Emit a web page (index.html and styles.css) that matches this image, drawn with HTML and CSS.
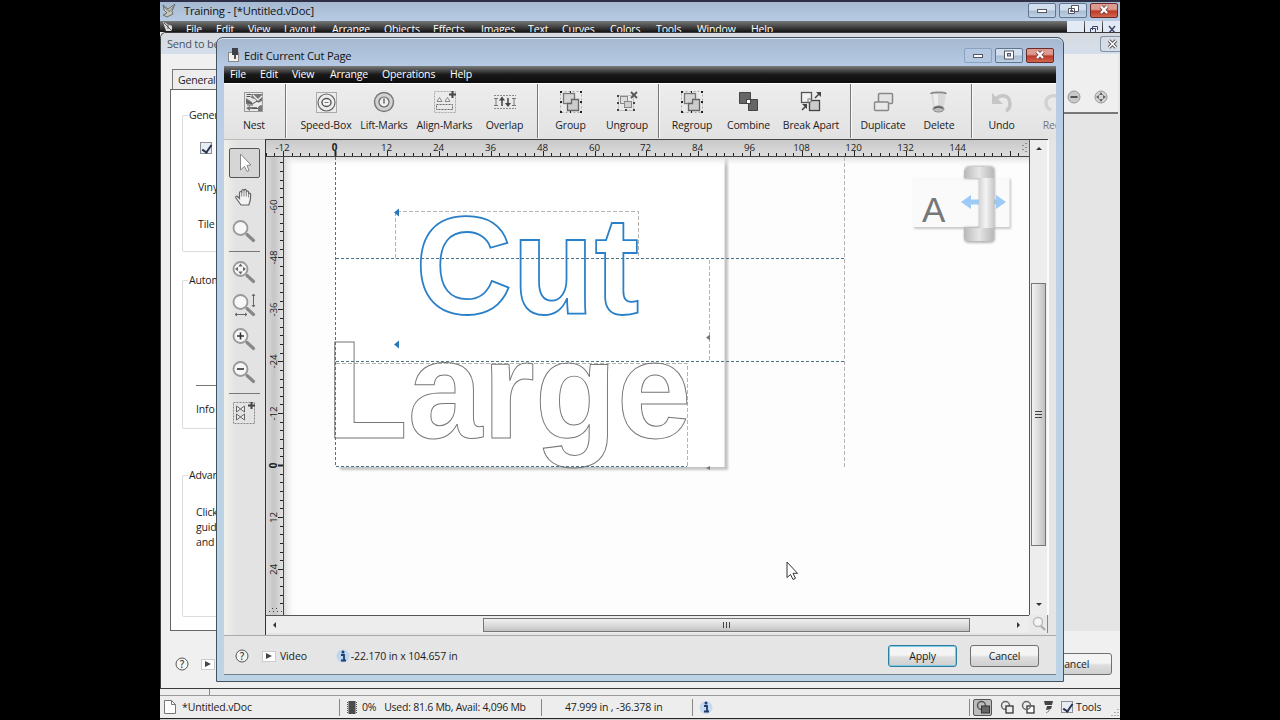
FILE: index.html
```
<!DOCTYPE html>
<html lang="en">
<head>
  <meta charset="utf-8">
  <title>Edit Current Cut Page</title>
  <link rel="stylesheet" href="styles.css">
</head>
<body>
  <div class="desktop">

    <!-- Main application -->
    <div class="app">
      <div class="titlebar">
        <svg class="app-icon" width="14" height="15" viewBox="0 0 14 15"><path d="M1 2l5 4 7-5-3 7 1 3-6 3-4-2 4-2-3-3z" fill="#c5c6bd" stroke="#6d6f6b"/><path d="M2 4l6 5M12 3L7 9" stroke="#777" fill="none"/></svg>
        <span class="title">Training - [*Untitled.vDoc]</span>
        <div class="win-buttons">
          <span class="win-btn"><svg width="12" height="10"><rect x="1.500" y="4.500" width="9" height="3" fill="#fff" stroke="#556"/></svg></span>
          <span class="win-btn"><svg width="12" height="10"><path d="M4.500 .5h7v6h-7z M1.500 3.500h6v5h-6z" fill="#fff" stroke="#556"/><path d="M3.500 5.500h2v1h-2z" stroke="#556"/></svg></span>
          <span class="win-btn close"><svg width="12" height="10"><path d="M3 1.500l6 6.500M9 1.500l-6 6.500" stroke="#633" stroke-width="4"/><path d="M3 1.500l6 6.500M9 1.500l-6 6.500" stroke="#fff" stroke-width="2.400"/></svg></span>
        </div>
      </div>
      <div class="app-menu">
        <svg width="12" height="10" viewBox="0 0 12 10"><path d="M1 1l9 4v5H4z" fill="#ddd"/><path d="M2 2l8 8M6 2v6" stroke="#555"/></svg>
        <span>File</span><span>Edit</span><span>View</span><span>Layout</span><span>Arrange</span><span>Objects</span><span>Effects</span><span>Images</span><span>Text</span><span>Curves</span><span>Colors</span><span>Tools</span><span>Window</span><span>Help</span>
        <div class="mdi"><i></i><i><svg width="8" height="8"><path d="M2.500 5V1.500h5V5M.5 7V3.500h5V8" fill="none" stroke="#446"/></svg></i><i><svg width="8" height="8"><path d="M1 1l6 7M7 1L1 8" stroke="#446" stroke-width="1.500"/></svg></i></div>
      </div>
      <div class="app-body"></div>
      <div class="app-scroll"><i></i><b></b></div>
      <div class="statusbar">
        <div class="st doc"><svg width="12" height="14"><path d="M.5.5h7l4 4v9H.5z" fill="#fff" stroke="#777"/><path d="M7.500.5v4h4" fill="none" stroke="#777"/></svg><span>*Untitled.vDoc</span></div>
        <div class="st mem"><svg width="10" height="13"><rect x="1.500" width="7" height="13" fill="#4c4c4c"/><path d="M.5 1v12M9.500 1v12" stroke="#555" stroke-dasharray="1 1"/></svg><span>0%</span><span>Used: 81.6 Mb, Avail: 4,096 Mb</span></div>
        <div class="st pos">47.999 in , -36.378 in</div>
        <div class="st info"><svg width="14" height="15" viewBox="0 0 14 15"><circle cx="7" cy="7.500" r="6.500" fill="#c6d9ee"/><path d="M5 6h3v5M5 11.500h5" stroke="#1f3e6d" stroke-width="1.800" fill="none"/><circle cx="7" cy="3" r="1.500" fill="#1f3e6d"/></svg></div>
        <div class="st modes">
          <span class="mode on"><svg width="14" height="14"><circle cx="5.500" cy="5.500" r="4" fill="none" stroke="#555" stroke-width="1.500"/><rect x="5.500" y="6" width="8" height="7" fill="#666" stroke="#333"/></svg></span>
          <span class="mode"><svg width="14" height="14"><circle cx="5.500" cy="5.500" r="4" fill="none" stroke="#666" stroke-width="1.500"/><rect x="6" y="6" width="7" height="7" fill="#eee" stroke="#333" stroke-width="1.300"/></svg></span>
          <span class="mode"><svg width="14" height="14"><rect x="6" y="6" width="7" height="7" fill="#fff" stroke="#333" stroke-width="1.300"/><circle cx="5.500" cy="5.500" r="4" fill="none" stroke="#666" stroke-width="1.500"/></svg></span>
          <span class="mode"><svg width="12" height="14"><path d="M1 1h9l-1 4H2zM4 6h5l-1 3-5 1z" fill="#444"/><path d="M6 9v2l-3 2" fill="none" stroke="#888"/></svg></span>
          <span class="check"></span><span>Tools</span>
          <svg class="grip" width="8" height="8"><path d="M7 1v1M4 4v1M7 4v1M1 7v1M4 7v1M7 7v1" stroke="#999" stroke-width="1.500"/></svg>
        </div>
      </div>
      <div class="taskbar"></div>
    </div>

    <!-- Dialog behind the editor -->
    <div class="send">
      <div class="send-title"><span>Send to be</span><span class="send-x"><svg width="11" height="10"><path d="M2 1.500l7 7M9 1.500l-7 7" stroke="#555" stroke-width="3.500"/><path d="M2 1.500l7 7M9 1.500l-7 7" stroke="#fff" stroke-width="1.500"/></svg></span></div>
      <div class="send-main">
        <div class="send-left">
          <div class="tab">General</div>
          <div class="tab-page">
            <fieldset class="g1"><legend>General</legend>
              <div class="check-row"><span class="check"></span></div>
              <p class="vinyl">Vinyl</p>
              <p class="tile">Tile</p>
            </fieldset>
            <fieldset class="g2"><legend>Automatic</legend>
              <hr><p>Info</p>
            </fieldset>
            <fieldset class="g3"><legend>Advanced</legend>
              <p>Click<br>guide<br>and</p>
            </fieldset>
          </div>
        </div>
        <div class="send-right">
          <div class="send-tools">
            <svg width="14" height="14"><circle cx="7" cy="7" r="6" fill="#c9c9c9" stroke="#999"/><path d="M3.500 7h7" stroke="#555" stroke-width="2"/></svg>
            <svg width="14" height="14"><circle cx="7" cy="7" r="6" fill="#d4d4d4" stroke="#999"/><path d="M7 2l2 3H5zM7 12l2-3H5zM2 7l3-2v4zM12 7L9 5v4z" fill="#666"/></svg>
          </div>
        </div>
      </div>
      <div class="send-foot">
        <svg width="14" height="14"><circle cx="7" cy="7" r="6" fill="#f6f6f6" stroke="#555"/><text x="7" y="10.500" class="q">?</text></svg>
        <span class="play"></span>
        <span class="btn send-cancel">Cancel</span>
      </div>
    </div>

    <!-- Edit Current Cut Page -->
    <div class="editor">
      <div class="ed-title">
        <svg width="13" height="15" viewBox="0 0 13 15"><rect x="1.500" y="4.500" width="10" height="9" fill="#f2f2ee" stroke="#888"/><rect x="5" y="0" width="6" height="7" fill="#3c4248"/><path d="M8 7v4" stroke="#555" stroke-width="2"/></svg>
        <span class="title">Edit Current Cut Page</span>
        <div class="win-buttons">
          <span class="win-btn min"><svg width="12" height="10"><rect x="1.500" y="4.500" width="9" height="3" fill="#fff" stroke="#556"/></svg></span>
          <span class="win-btn"><svg width="12" height="10"><rect x="1.500" y="1" width="9" height="8" fill="#fff" stroke="#556"/><rect x="4.500" y="3.500" width="3" height="2.500" fill="#abd" stroke="#556"/></svg></span>
          <span class="win-btn close"><svg width="12" height="10"><path d="M3 1.500l6 6.500M9 1.500l-6 6.500" stroke="#633" stroke-width="4"/><path d="M3 1.500l6 6.500M9 1.500l-6 6.500" stroke="#fff" stroke-width="2.400"/></svg></span>
        </div>
      </div>

      <div class="ed-client">
        <div class="ed-menu"><span>File</span><span>Edit</span><span>View</span><span>Arrange</span><span>Operations</span><span>Help</span></div>

        <div class="toolbar">
          <div class="tool"><svg viewBox="0 0 24 24"><rect x="2.500" y="2.500" width="18" height="19" fill="#e8e8e8" stroke="#999"/><path d="M10 4h10v7l-4 2-3-4-4-1zM4 8l6 4v2H4zM20 14v7h-4v-4zM8 16l-4 2 4 3v-2h7v-2H8z" fill="#777"/><path d="M4.500 4.500h5M4.500 6.500h4M4 11l6 3 9-5M5 15h6M10 18.500h6" fill="none" stroke="#555"/><path d="M11 5l5 5 4-4M15 13l5 2" fill="none" stroke="#f3f3f3" stroke-width="1.300"/></svg><span>Nest</span></div>
          <i class="sep"></i>
          <div class="tool"><svg viewBox="0 0 24 24"><rect x="2.500" y="2.500" width="20" height="20" fill="#ececec" stroke="#aaa"/><circle cx="12.500" cy="12.500" r="8.500" fill="none" stroke="#666" stroke-width="1.200"/><ellipse cx="12.500" cy="12.500" rx="4.500" ry="4" fill="#f5f5f5" stroke="#555" stroke-width="1.400"/><path d="M10.500 12.500h4" stroke="#777"/></svg><span>Speed-Box</span></div>
          <div class="tool"><svg viewBox="0 0 24 24"><circle cx="12" cy="12" r="9.500" fill="#d2d2d2" stroke="#777" stroke-width="1.400"/><circle cx="12" cy="12" r="5" fill="#eee" stroke="#666" stroke-width="1.200"/><path d="M12 8.500v5" stroke="#555" stroke-width="1.300"/></svg><span>Lift-Marks</span></div>
          <div class="tool"><svg viewBox="0 0 24 24"><rect x="1.500" y="1.500" width="21" height="21" fill="none" stroke="#aaa" stroke-dasharray="2 1"/><path d="M4 11.500l2.500-4 2.500 4zM12 11.500l2.500-4 2.500 4z" fill="#f3f3f3" stroke="#888"/><rect x="3.500" y="14.500" width="16" height="5" fill="none" stroke="#666" stroke-dasharray="2 1"/><path d="M16 4.500h7M19.500 1v7" stroke="#444" stroke-width="2"/></svg><span>Align-Marks</span></div>
          <div class="tool"><svg viewBox="0 0 24 24"><path d="M1 5.500h22M1 18.500h22" stroke="#888" stroke-dasharray="2 1"/><path d="M1 8.500h4M3 8v7M1 15.500h4M19 8.500h4M21 8v7M19 15.500h4" stroke="#777"/><path d="M9 16V9M15 8v7" stroke="#444" stroke-width="1.500"/><path d="M6 10.500l3-4 3 4zM12 13l3 4 3-4z" fill="#444"/></svg><span>Overlap</span></div>
          <i class="sep"></i>
          <div class="tool"><svg viewBox="0 0 24 24"><g id="group-shape"><rect x="1.500" y="1.500" width="21" height="21" fill="none" stroke="#aaa" stroke-dasharray="2 2"/><rect x="4.500" y="3.500" width="11" height="10" fill="#d5d5d5" stroke="#777" stroke-width="1.300"/><path d="M12.500 9.500h7v11h-11v-7h4z" fill="#ccc" stroke="#666" stroke-width="1.300"/><path d="M1 1h2v2H1zM21 1h2v2h-2zM1 21h2v2H1zM21 21h2v2h-2zM11 1h1v2h-1zM11 21h1v2h-1zM1 11h2v2H1zM21 11h2v2h-2z" fill="#222"/></g></svg><span>Group</span></div>
          <div class="tool"><svg viewBox="0 0 24 24"><rect x="3.500" y="5.500" width="15" height="15" fill="none" stroke="#999" stroke-dasharray="1 1"/><rect x="5.500" y="6.500" width="7" height="7" fill="#ddd" stroke="#888"/><rect x="9.500" y="11.500" width="7" height="6" fill="#d0d0d0" stroke="#888"/><path d="M2 5h2v2H2zM2 19h2v2H2zM18 19h2v2h-2zM2 12h2v2H2zM10 19h2v2h-2zM18 12h2v2h-2z" fill="#444"/><path d="M16 2l6 6M22 2l-6 6" stroke="#555" stroke-width="1.800"/></svg><span>Ungroup</span></div>
          <i class="sep"></i>
          <div class="tool"><svg viewBox="0 0 24 24"><use href="#group-shape"/></svg><span>Regroup</span></div>
          <div class="tool"><svg viewBox="0 0 24 24"><path d="M2.500 2.500h11v7h7v11h-9v-7h-9z" fill="#666" stroke="#444"/><rect x="9.500" y="9.500" width="4" height="4" fill="#fff" stroke="#444"/></svg><span>Combine</span></div>
          <div class="tool"><svg viewBox="0 0 24 24"><rect x="2.500" y="2.500" width="10" height="10" fill="#f1f1f1" stroke="#555" stroke-width="1.300"/><rect x="10.500" y="10.500" width="10" height="10" fill="#ccc" stroke="#444" stroke-width="1.300"/><path d="M16 8l4-4M7 16l-4 4" stroke="#444" stroke-width="1.500"/><path d="M17 2h5v5zM8 14v5l-5-5z" fill="#444"/><rect x="9" y="9" width="3" height="3" fill="#fff" stroke="#777"/></svg><span>Break Apart</span></div>
          <i class="sep"></i>
          <div class="tool"><svg viewBox="0 0 24 24"><rect x="7.500" y="3.500" width="14" height="10" rx="1" fill="#e4e4e4" stroke="#888" stroke-width="1.500"/><rect x="3.500" y="12" width="14" height="8.500" rx="1" fill="#e9e9e9" stroke="#888" stroke-width="1.500"/></svg><span>Duplicate</span></div>
          <div class="tool"><svg viewBox="0 0 24 24"><path d="M4 3h15l-2.500 17h-10z" fill="#d8d8d8"/><path d="M6 4h5v14H8z" fill="#eee"/><path d="M3.500 3.500c0-2 16-2 16 0-4-1-12-1-16 0z" fill="#777" stroke="#888"/><ellipse cx="11.500" cy="19" rx="5.500" ry="3" fill="#bbb" stroke="#888"/><path d="M7 18.500c3-2 6-2 9 0" stroke="#555" fill="none" stroke-width="1.500"/></svg><span>Delete</span></div>
          <i class="sep"></i>
          <div class="tool"><svg viewBox="0 0 24 24"><path d="M5 10c6-7 15-5 15 4 0 3-2 6-4 7" fill="none" stroke="#c6c6c6" stroke-width="3.500"/><path d="M2 3v11h11z" fill="#c6c6c6"/></svg><span>Undo</span></div>
          <div class="tool redo"><svg viewBox="0 0 24 24"><path d="M19 10C13 3 3 5 3 13c0 4 2 6 5 7" fill="none" stroke="#d2d2d2" stroke-width="3.500"/></svg><span>Redo</span></div>
        </div>

        <div class="work">
          <div class="side">
            <div class="side-tool active"><svg viewBox="0 0 24 24"><path d="M8.500 3v16l4-3.500 2.500 5 2-1-2-5 4-.5z" fill="#fff" stroke="#888"/></svg></div>
            <div class="side-tool hand"><svg viewBox="0 0 24 24"><path d="M9 20L4 13c-1-2 1-2.500 2-1l1.500 1.500V8c0-2 2-2 2.200 0l.1-2c0-2 2-2 2.200 0l.2-.8c.5-1.400 2-1 2.100.6l.1 1c.6-1.300 2.100-1 2.200.5l.1 1.500c.9-.8 2-.5 2 .8l-.4 5.500-1.500 4.900z" fill="#f4f4f4" stroke="#666" stroke-width="1.200"/><path d="M9.700 7v4.500M12 6v5.500M14.300 7v4.500M16.600 9v3.500" stroke="#888"/></svg></div>
            <div class="side-tool zoom"><svg viewBox="0 0 24 24"><g id="lens"><path d="M15 15.500l6.500 6" stroke="#888" stroke-width="3.200" stroke-linecap="round"/><circle cx="8.500" cy="9" r="7" fill="#f7f7f7" stroke="#999" stroke-width="1.800"/></g></svg></div>
            <i class="hsep s1"></i>
            <div class="side-tool fit"><svg viewBox="0 0 24 24"><use href="#lens"/><path d="M8.500 3.500l2.200 3H6.300zM8.500 14.500l2.200-3H6.300zM3 9l3-2.200v4.400zM14 9l-3-2.200v4.400z" fill="#666"/></svg></div>
            <div class="side-tool fitpage"><svg viewBox="0 0 24 24"><use href="#lens"/><path d="M21.500 1v13M3 21.500h12M20 3l1.500-2L23 3M20 12l1.500 2 1.500-2M5 20l-2 1.500L5 23M13 20l2 1.500-2 1.500" fill="none" stroke="#666"/></svg></div>
            <div class="side-tool zin"><svg viewBox="0 0 24 24"><use href="#lens"/><path d="M5 9h7M8.500 5.500v7" stroke="#333" stroke-width="1.600"/></svg></div>
            <div class="side-tool zout"><svg viewBox="0 0 24 24"><use href="#lens"/><path d="M5 9h7" stroke="#333" stroke-width="1.600"/></svg></div>
            <i class="hsep s2"></i>
            <div class="side-tool marks"><svg viewBox="0 0 24 24"><rect x="1.500" y="1.500" width="21" height="21" fill="none" stroke="#888" stroke-dasharray="2 1"/><path d="M4.500 5v6l4-3zM12.500 5v6l-4-3zM4.500 13v6l4-3zM12.500 13v6l-4-3z" fill="#eee" stroke="#666"/><path d="M16 4.500h7M19.500 1v7" stroke="#444" stroke-width="2"/></svg></div>
          </div>

          <div class="view">
            <svg class="ruler-top" id="rulerTop" viewBox="266 140 763 17"></svg>
            <svg class="ruler-left" id="rulerLeft" viewBox="266 157 18 458"></svg>
            <svg class="canvas" viewBox="284 157 745 458">
              <defs>
                <linearGradient id="fadeDown" x2="0" y2="1"><stop offset="0" stop-color="#dedede"/><stop offset="1" stop-color="#fdfdfd" stop-opacity="0"/></linearGradient>
                <linearGradient id="fadeRight"><stop offset="0" stop-color="#dadada"/><stop offset="1" stop-color="#fdfdfd" stop-opacity="0"/></linearGradient>
                <linearGradient id="roll"><stop offset="0" stop-color="#b8b8b8"/><stop offset=".5" stop-color="#e6e6e6"/><stop offset="1" stop-color="#b8b8b8"/></linearGradient>
                <linearGradient id="bar"><stop offset="0" stop-color="#d4d4d4"/><stop offset=".45" stop-color="#f4f4f4"/><stop offset="1" stop-color="#c8c8c8"/></linearGradient>
                <filter id="soft"><feGaussianBlur stdDeviation="1.300"/></filter>
              </defs>
              <rect x="284" y="157" width="745" height="458" fill="#fdfdfd"/>
              <!-- vinyl page -->
              <rect x="340" y="150" width="388" height="320" fill="#c4c4c4" filter="url(#soft)"/>
              <rect x="335" y="157" width="389.500" height="310" fill="#fff"/>
              <rect x="284" y="157" width="745" height="10" fill="url(#fadeDown)"/>
              <rect x="284" y="157" width="12" height="458" fill="url(#fadeRight)"/>

              <g class="bounds">
                <path d="M395.500 258V211.500H638.500V258M709.500 260V361M336 363.500H687.500V466M844.500 157V467"/>
              </g>
              <text class="outline grey" x="338.200" y="438.500" transform="scale(.963 1)">Large</text>
              <text class="outline blue" x="431.300" y="314" transform="scale(.963 1)">Cut</text>
              <g class="tiles">
                <path d="M335.500 157V466.500H687"/>
                <path d="M336 258.500H844M336 361.500H844"/>
              </g>
              <path d="M394 212.500l5-4v8zM394 344.500l5-4v8z" fill="#2878b8"/>
              <path d="M706 337.500l4-3v6zM706 468l4-2v4z" fill="#777"/>

              <!-- orientation preview -->
              <rect x="914" y="179" width="97" height="50" fill="#c8c8c8" filter="url(#soft)"/>
              <rect x="913" y="177" width="96.500" height="50" fill="#fafafa"/>
              <text x="922" y="222" class="preview-a">A</text>
              <path d="M961 202l10-7v4.500h10v5h-10v4.500zM1006 202l-10-7v4.500h-4v5h4v4.500z" fill="#9ccbf8"/>
              <path d="M965 169q0-3 6-3h18q6 0 6 4v69q0 4-6 4h-19q-6 0-6-4v-12h15v-48h-15z" fill="#b5b5b5" filter="url(#soft)"/>
              <rect x="979" y="176" width="15" height="54" fill="url(#bar)"/>
              <path d="M964 178v-7q1-4 7-4h17q6 0 6 4v7z" fill="url(#roll)"/>
              <path d="M964 228h30v9q0 4-6 4h-18q-6 0-6-4z" fill="url(#roll)"/>

              <path d="M787 562v15.500l3.500-3 2.500 5 2.500-1.200-2.500-5h4.500z" fill="#fff" stroke="#333"/>
            </svg>
            <div class="vscroll"><i class="up"></i><div class="vthumb"><b></b></div><i class="down"></i></div>
            <div class="hscroll"><i class="left"></i><div class="hthumb"><b></b></div><i class="right"></i></div>
            <div class="corner"><svg width="16" height="16"><circle cx="7" cy="6" r="4.500" fill="#f5f5f5" stroke="#bbb" stroke-width="1.500"/><path d="M10 10l4 4" stroke="#aaa" stroke-width="2"/></svg></div>
          </div>
        </div>

        <div class="ed-foot">
          <svg width="14" height="14"><circle cx="7" cy="7" r="6" fill="#f3f3f3" stroke="#555"/><text x="7" y="10.500" class="q">?</text></svg>
          <span class="play"></span>
          <span class="video">Video</span>
          <svg class="info-ico" width="14" height="15" viewBox="0 0 14 15"><circle cx="7" cy="7" r="6.500" fill="#bdd6f0"/><path d="M5 6h3v5M5 11.500h5" stroke="#1f3e6d" stroke-width="1.800" fill="none"/><circle cx="7" cy="3" r="1.500" fill="#1f3e6d"/></svg>
          <span class="size">-22.170 in x 104.657 in</span>
          <div class="foot-buttons">
            <button class="btn primary">Apply</button>
            <button class="btn">Cancel</button>
          </div>
        </div>
      </div>
    </div>
  </div>

  <script>
    const STEP = 51.9; // pixels per 12 inches
    const NS = 'http://www.w3.org/2000/svg';

    function add(parent, name, attrs, text) {
      const el = document.createElementNS(NS, name);
      for (const key in attrs) el.setAttribute(key, attrs[key]);
      if (text !== undefined) el.textContent = text;
      parent.appendChild(el);
    }

    const rulerTop = document.getElementById('rulerTop');
    for (let i = -8; i < 80; i++) {
      const x = Math.round(335 + i * STEP / 6) + 0.5;
      if (x > 1022) break;
      const h = i % 6 === 0 ? 5 : 3;
      add(rulerTop, 'path', { d: `M${x} 156v-${h}`, class: i === 0 ? 'tick zero' : 'tick' });
      if (i % 6 === 0 && i <= 72) {
        add(rulerTop, 'text', { x: x - 1, y: 150.5, class: i === 0 ? 'num zero' : 'num' }, i * 2);
      }
    }
    add(rulerTop, 'path', { d: 'M266 156.5h763', class: 'edge' });
    add(rulerTop, 'path', { d: 'M1026 143v12M1023 145v8', class: 'more' });

    const rulerLeft = document.getElementById('rulerLeft');
    for (let i = -35; i < 17; i++) {
      const y = Math.round(466 + i * STEP / 6) - 0.5;
      const w = i % 6 === 0 ? 5 : 3;
      add(rulerLeft, 'path', { d: `M283 ${y}h-${w}`, class: i === 0 ? 'tick zero' : 'tick' });
      if (i % 6 === 0) {
        add(rulerLeft, 'text', { transform: `translate(276.500 ${y}) rotate(-90)`, class: i === 0 ? 'num zero' : 'num' }, i * 2);
      }
    }
    add(rulerLeft, 'path', { d: 'M283.5 157v458', class: 'edge' });
    add(rulerLeft, 'path', { d: 'M269 611.5h13M272 608.5h8', class: 'more' });
  </script>
</body>
</html>
```
FILE: styles.css
```
* {
  box-sizing: border-box;
}

body {
  margin: 0;
  background: #000;
  font-family: "Open Sans", "Noto Sans", sans-serif;
  font-size: 10.5px;
  letter-spacing: -0.15px;
  color: #1c1c1c;
}

svg {
  display: block;
  flex: none;
}

p {
  margin: 0;
}

span {
  white-space: nowrap;
}

.desktop {
  position: relative;
  width: 1280px;
  height: 720px;
  overflow: hidden;
}

/* Main application */
.app {
  width: 960px;
  height: 720px;
  margin-left: 160px;
  display: flex;
  flex-direction: column;
  background: #e6e6e6;
  border-top: 2px solid #2e3048;
}

.titlebar {
  height: 19px;
  display: flex;
  align-items: center;
  padding: 0 2px 3px;
  background: linear-gradient(#a6b9d0, #b7cce4);
}

.titlebar .title,
.ed-title .title {
  font-size: 11.2px;
  letter-spacing: -0.22px;
  color: #111;
}

.titlebar .title {
  margin-left: 8px;
}

.win-buttons {
  display: flex;
  gap: 3px;
  margin-left: auto;
}

.win-btn {
  width: 28px;
  height: 15px;
  display: flex;
  align-items: center;
  justify-content: center;
  border: 1px solid #5f7590;
  border-radius: 2px;
  background: linear-gradient(#d1deed 45%, #a9bdd4 55%, #bed1e5);
}

.win-btn.min {
  border-color: #8ba3c0;
  background: #b4c8e2;
}

.win-btn.close {
  border-color: #6b2b2b;
  background: linear-gradient(#dc9b90 40%, #bd3a29 55%, #d0664f);
}

.app-menu {
  height: 11px;
  display: flex;
  padding-left: 2px;
  background: linear-gradient(#777, #151515);
  overflow: hidden;
  color: #fff;
  line-height: 17px;
}

.app-menu span {
  flex: none;
}

.app-menu span:nth-of-type(1) { width: 30px; margin-left: 12px; }
.app-menu span:nth-of-type(2) { width: 32px; }
.app-menu span:nth-of-type(3) { width: 36px; }
.app-menu span:nth-of-type(4) { width: 48px; }
.app-menu span:nth-of-type(5) { width: 52px; }
.app-menu span:nth-of-type(6) { width: 49px; }
.app-menu span:nth-of-type(7) { width: 48px; }
.app-menu span:nth-of-type(8) { width: 47px; }
.app-menu span:nth-of-type(9) { width: 34px; }
.app-menu span:nth-of-type(10) { width: 48px; }
.app-menu span:nth-of-type(11) { width: 46px; }
.app-menu span:nth-of-type(12) { width: 41px; }
.app-menu span:nth-of-type(13) { width: 54px; }

.mdi {
  display: flex;
  gap: 1px;
  margin-left: auto;
}

.mdi i {
  width: 17px;
  padding: 4px 0 0 5px;
  background: #e2ebf5;
}

.app-body {
  flex: 1;
}

.app-scroll {
  height: 9px;
  display: flex;
  border-bottom: 1px solid #999;
  background: #eee;
}

.app-scroll i {
  width: 50px;
  border-right: 1px solid #888;
}

.app-scroll b {
  width: 140px;
  height: 3px;
  margin-left: 564px;
}

.statusbar {
  height: 22px;
  display: flex;
  align-items: center;
  background: #ededed;
}

.st {
  display: flex;
  align-items: center;
  height: 17px;
  border-left: 1px solid #888;
}

.doc {
  width: 179px;
  padding-left: 4px;
  gap: 6px;
  border: 0;
}

.mem {
  width: 202px;
  padding-left: 7px;
  gap: 5px;
}

.mem span {
  letter-spacing: -0.25px;
}

.mem span + span {
  margin-left: 3px;
}

.pos {
  width: 151px;
  padding-left: 23px;
}

.info {
  width: 60px;
  padding-left: 6px;
}

.modes {
  margin-left: auto;
  padding-left: 3px;
  width: 151px;
}

.mode {
  width: 21px;
  height: 17px;
  display: flex;
  align-items: center;
  justify-content: center;
}

.mode.on {
  width: 19px;
  margin-right: 4px;
  border: 1px solid #555;
  border-radius: 2px;
  background: #bcbcbc;
}

.check {
  width: 12px;
  height: 12px;
  border: 1px solid #8a8f96;
  background: #e8edf5;
  position: relative;
}

.check::after {
  content: "";
  position: absolute;
  left: 3px;
  top: 0;
  width: 4px;
  height: 8px;
  border: solid #2b3350;
  border-width: 0 2px 2px 0;
  transform: rotate(35deg);
}

.modes .check {
  margin: 0 3px 0 2px;
}

.grip {
  align-self: flex-end;
  margin-left: 10px;
}

.taskbar {
  height: 2px;
  border-top: 1px solid #222;
  background: #ccc;
}

/* Dialog behind the editor */
.send {
  position: absolute;
  left: 160px;
  top: 32px;
  width: 960px;
  height: 657px;
  display: flex;
  flex-direction: column;
  border: 1px solid #3b3b3b;
  border-right: 0;
  border-radius: 6px 0 0 0;
  background: #f0f0f0;
}

.send-title {
  height: 22px;
  display: flex;
  justify-content: space-between;
  padding: 3px 0 0 6px;
  background: linear-gradient(#d7dbe1 3px, #d4dfeb);
  border-radius: 5px 0 0 0;
  font-size: 11px;
  letter-spacing: -0.25px;
  color: #4a525c;
}

.send-x {
  width: 20px;
  height: 16px;
  display: flex;
  align-items: center;
  justify-content: center;
  padding-left: 4px;
  border: 1px solid #8392a6;
  border-right: 0;
  border-radius: 3px 0 0 3px;
}

.send-main {
  height: 577px;
  display: flex;
  justify-content: space-between;
}

.send-left {
  width: 60px;
  padding: 15px 0 0 9px;
}

.tab {
  width: 60px;
  height: 20px;
  margin-left: 2px;
  padding: 3px 0 0 5px;
  border: 1px solid #777;
  border-bottom: 0;
  background: #ededed;
}

.tab-page {
  width: 70px;
  height: 542px;
  padding: 18px 0 0 11px;
  border: 1px solid #666;
  background: #fff;
}

fieldset {
  width: 70px;
  margin: 0;
  padding: 0;
  border: 1px solid #dcdcdc;
  border-radius: 2px;
}

legend {
  margin-left: 5px;
  padding: 0 1px;
  line-height: 14px;
}

.g1 {
  height: 144px;
}

.g2 {
  height: 156px;
  margin-top: 21px;
}

.g3 {
  height: 149px;
  margin-top: 39px;
}

.check-row {
  padding: 20px 0 0 17px;
  display: flex;
}

.vinyl {
  margin: 26px 0 0 15px;
}

.tile {
  margin: 23px 0 0 15px;
}

.g2 hr {
  margin: 98px 0 0 13px;
  border: 0;
  border-top: 1px solid #777;
}

.g2 p {
  margin: 16px 0 0 13px;
}

.g3 p {
  margin: 23px 0 0 13px;
  line-height: 15px;
}

.send-right {
  width: 60px;
  background: #e5e5e5;
}

.send-tools {
  height: 60px;
  display: flex;
  gap: 13px;
  padding: 36px 0 0 7px;
  margin-right: 2px;
  border-bottom: 2px solid #777;
  background: #efefef;
}

.send-foot {
  height: 58px;
  display: flex;
  align-items: center;
  padding: 9px 8px 0 14px;
}

.play {
  width: 14px;
  height: 11px;
  display: flex;
  align-items: center;
  justify-content: center;
  border: 1px solid #ccc;
  background: #fff;
}

.play::after {
  content: "";
  border-left: 6px solid #444;
  border-top: 3px solid transparent;
  border-bottom: 3px solid transparent;
}

.send-foot .play {
  margin-left: 12px;
}

.btn {
  width: 69px;
  height: 22px;
  padding: 0;
  display: flex;
  align-items: center;
  justify-content: center;
  border: 1px solid #707070;
  border-radius: 3px;
  background: linear-gradient(#f4f4f4 45%, #dedede 55%, #cfcfcf);
  font: inherit;
  letter-spacing: inherit;
  color: #1c1c1c;
}

.btn.primary {
  border-color: #2c7f9e;
  box-shadow: inset 0 0 0 1px #83c9e2;
}

.btn.send-cancel {
  width: 77px;
  margin-left: auto;
}

.q {
  font-size: 10px;
  font-weight: 600;
  text-anchor: middle;
  fill: #444;
}

/* Editor window */
.editor {
  position: absolute;
  left: 216px;
  top: 37px;
  width: 848px;
  height: 645px;
  padding: 0 7px 6px;
  border: 1px solid #435261;
  border-radius: 7px 7px 0 0;
  background: linear-gradient(#a5b8cf, #b6cae5 28px, #bdd0e6 120px, #bcd4e5);
  box-shadow: inset 0 1px 0 #dfe8f2;
}

.ed-title {
  height: 28px;
  display: flex;
  align-items: center;
  padding: 6px 2px 0 3px;
}

.ed-title .title {
  margin-left: 4px;
}

.ed-client {
  width: 832px;
  height: 609px;
  display: flex;
  flex-direction: column;
  border-bottom: 1px solid #73818c;
  background: #e5e5e5;
  overflow: hidden;
}

.ed-menu {
  height: 17px;
  flex: none;
  display: flex;
  padding-left: 6px;
  background: linear-gradient(#7c7c7c, #1a1a1a 50%, #0c0c0c);
  color: #fff;
  line-height: 16px;
}

.ed-menu span:nth-child(1) { width: 30px; }
.ed-menu span:nth-child(2) { width: 32px; }
.ed-menu span:nth-child(3) { width: 38px; }
.ed-menu span:nth-child(4) { width: 52px; }
.ed-menu span:nth-child(5) { width: 68px; }

.toolbar {
  height: 56px;
  flex: none;
  display: grid;
  grid-template-columns: 46px 18px 62px 54px 67px 53px 13px 53px 60px 4px 62px 51px 74px 5px 60px 52px 13px 47px 60px;
  padding-left: 7px;
  border-top: 1px solid #fff;
  background: linear-gradient(#ededed, #e2e2e2);
}

.tool {
  display: flex;
  flex-direction: column;
  align-items: center;
  padding-top: 6px;
}

.tool svg {
  width: 24px;
  height: 24px;
}

.tool span {
  margin-top: 4px;
  line-height: 14px;
}

.redo {
  color: #777;
}

.sep {
  width: 2px;
  height: 54px;
  justify-self: center;
  border-left: 1px solid #777;
  border-right: 1px solid #fafafa;
}

.work {
  height: 497px;
  flex: none;
  display: flex;
  border-bottom: 1px solid #aaa;
}

.side {
  width: 41px;
  padding: 8px 0 0 5px;
  border-top: 1px solid #bbb;
  background: linear-gradient(90deg, #f0f0ec, #e3e3e3 12px);
}

.side-tool {
  width: 29px;
  display: flex;
  align-items: center;
  justify-content: center;
}

.side-tool svg {
  width: 24px;
  height: 24px;
}

.side-tool.active {
  width: 31px;
  height: 30px;
  padding-right: 2px;
  border: 1px solid #555;
  border-radius: 2px;
  background: #d6d6d6;
}

.hand { height: 37px; }
.zoom { height: 32px; }
.fit { height: 36px; }
.fitpage { height: 30px; }
.zin { height: 38px; }
.zout { height: 27px; }
.marks { height: 23px; }

.hsep {
  display: block;
  width: 31px;
  border-top: 1px solid #777;
}

.s1 { margin: 4px 0 2px; }
.s2 { margin: 8px 0 7px; }

.view {
  width: 783px;
  display: grid;
  grid-template-columns: 18px 745px 19px;
  grid-template-rows: 17px 458px 18px;
  border-left: 1px solid #333;
  border-top: 1px solid #444;
}

.ruler-top {
  grid-column: 1 / 3;
  width: 763px;
  height: 17px;
  background: linear-gradient(#c9c9c9, #dedede);
}

.ruler-left {
  grid-row: 2;
  width: 18px;
  height: 458px;
  background: linear-gradient(90deg, #dadada, #c6c6c6 8px, #e4e4e4);
}

.edge {
  stroke: #444;
}

.tick {
  stroke: #222;
}

.tick.zero {
  stroke-width: 2;
}

.num {
  font-size: 9.8px;
  letter-spacing: -0.1px;
  text-anchor: middle;
  fill: #222;
}

.num.zero {
  font-weight: bold;
}

.more {
  stroke: #444;
  stroke-dasharray: 1 3;
}

.canvas {
  grid-row: 2;
  grid-column: 2;
  width: 745px;
  height: 458px;
}

.outline {
  font-family: "Liberation Sans", Arial, sans-serif;
  font-size: 139.5px;
  font-weight: bold;
  letter-spacing: 0;
  fill: none;
}

.outline.blue {
  stroke: #2a80c8;
  stroke-width: 1.8;
}

.outline.grey {
  stroke: #777;
  stroke-width: 1;
}

.bounds path {
  fill: none;
  stroke: #b5b5b5;
  stroke-dasharray: 4 2;
}

.tiles path {
  fill: none;
  stroke: #49748a;
  stroke-dasharray: 3 2;
}

.preview-a {
  font-family: "Liberation Sans", Arial, sans-serif;
  font-size: 35px;
  fill: #777;
}

.vscroll {
  grid-column: 3;
  grid-row: 1 / 3;
  width: 20px;
  display: flex;
  flex-direction: column;
  align-items: center;
  border-left: 1px solid #555;
  border-right: 2px solid #fafafa;
  background: #ededed;
}

.vscroll i,
.hscroll i {
  border: 3px solid transparent;
}

.up {
  margin-top: 4px;
  border-bottom-color: #333 !important;
}

.vthumb {
  width: 15px;
  height: 263px;
  margin-top: 133px;
  display: flex;
  align-items: center;
  justify-content: center;
  border: 1px solid #777;
  background: linear-gradient(90deg, #f0f0f0, #dcdcdc 50%, #bebebe);
}

.vthumb b {
  width: 7px;
  height: 7px;
  background: repeating-linear-gradient(#444 0 1px, transparent 1px 3px);
}

.down {
  margin-top: 57px;
  border-top-color: #333 !important;
}

.hscroll {
  grid-column: 1 / 3;
  grid-row: 3;
  display: flex;
  align-items: center;
  border-top: 1px solid #555;
  background: #ededed;
}

.left {
  margin-left: 4px;
  border-right-color: #333 !important;
}

.hthumb {
  width: 487px;
  height: 14px;
  margin-left: 207px;
  display: flex;
  align-items: center;
  justify-content: center;
  border: 1px solid #777;
  background: linear-gradient(#f0f0f0, #dcdcdc 50%, #c2c2c2);
}

.hthumb b {
  width: 7px;
  height: 6px;
  background: repeating-linear-gradient(90deg, #444 0 1px, transparent 1px 3px);
}

.right {
  margin-left: 47px;
  border-left-color: #333 !important;
}

.corner {
  grid-column: 3;
  grid-row: 3;
  width: 19px;
  padding: 1px 0 0 2px;
  border-right: 1px solid #888;
  background: #e9e9e9;
}

.ed-foot {
  flex: 1;
  display: flex;
  align-items: center;
  padding: 2px 17px 0 11px;
}

.ed-foot .play {
  margin-left: 13px;
}

.video {
  margin-left: 4px;
}

.info-ico {
  margin-left: 29px;
}

.size {
  margin-left: 1px;
  letter-spacing: -0.12px;
}

.foot-buttons {
  display: flex;
  gap: 13px;
  margin-left: auto;
}
```
